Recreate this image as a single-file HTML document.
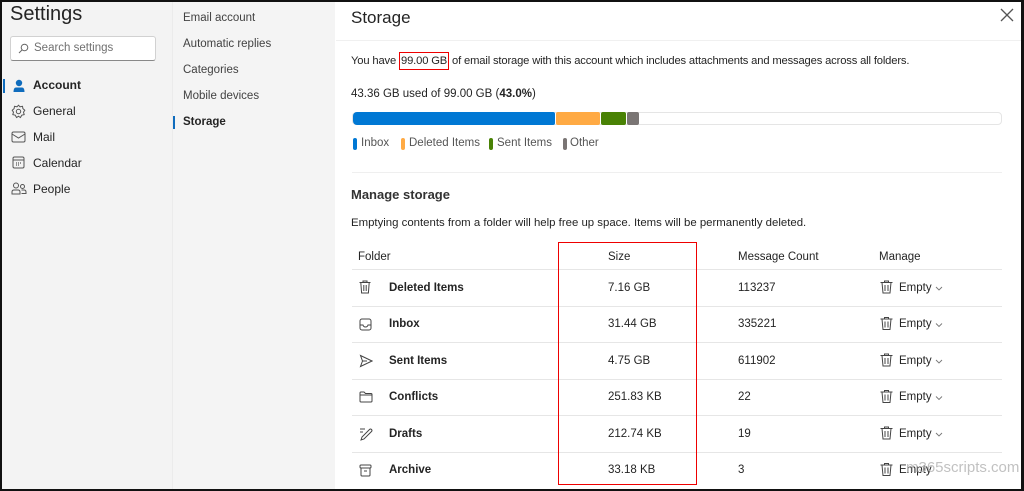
<!DOCTYPE html>
<html><head><meta charset="utf-8"><style>
*{margin:0;padding:0;box-sizing:border-box}
body{width:1024px;height:491px;overflow:hidden;font-family:"Liberation Sans",sans-serif;color:#242424;background:#fff;position:relative}
.a{position:absolute;white-space:nowrap}
.frame{position:absolute;left:0;top:0;width:1024px;height:491px;border:2px solid #111;border-right-width:3px;pointer-events:none}
.f{font-size:11.5px}
.nav{font-size:12px;color:#242424}
.mid{font-size:11.5px;color:#424242}
.hl{position:absolute;left:352px;width:650px;height:1px;background:#e6e6e6}
svg{position:absolute}
</style></head><body>
<div class="a" style="left:0;top:0;width:172px;height:491px;background:#f3f3f3"></div>
<div class="a" style="left:172px;top:0;width:163px;height:491px;background:#f4f4f4;border-left:1px solid #ebebeb"></div>
<div class="a" style="left:10px;top:3px;font-size:20px;color:#242424">Settings</div>
<div class="a" style="left:10px;top:36px;width:146px;height:25px;background:#fff;border:1px solid #d1d1d1;border-bottom-color:#888;border-radius:3px"></div>
<svg style="left:18px;top:43px" width="11" height="11" viewBox="0 0 11 11"><circle cx="6.5" cy="4.5" r="3.3" fill="none" stroke="#666" stroke-width="1"/><path d="M4 7 L1 10" stroke="#666" stroke-width="1"/></svg>
<div class="a" style="left:34px;top:42px;font-size:11.5px;color:#707070">Search settings</div>
<div class="a" style="left:3px;top:79px;width:2px;height:14px;background:#0f6cbd"></div>
<svg style="left:12px;top:79px" width="14" height="14" viewBox="0 0 14 14"><circle cx="7" cy="4" r="3.2" fill="#0f6cbd"/><path d="M1.5 13 Q1.5 8.5 4 8.5 H10 Q12.5 8.5 12.5 13 Z" fill="#0f6cbd"/></svg>
<div class="a nav" style="left:33px;top:78px;font-weight:bold">Account</div>
<svg style="left:11px;top:104px" width="15" height="15" viewBox="0 0 15 15" fill="none" stroke="#555" stroke-width="1"><circle cx="7.5" cy="7.5" r="2.2"/><path d="M7.5 1.2 L9 2.8 L11.5 2.3 L11.9 4.6 L13.8 6.2 L12.5 8.2 L13.2 10.6 L10.8 11.2 L9.4 13.5 L7.5 12.2 L5.6 13.5 L4.2 11.2 L1.8 10.6 L2.5 8.2 L1.2 6.2 L3.1 4.6 L3.5 2.3 L6 2.8 Z"/></svg>
<div class="a nav" style="left:33px;top:104px">General</div>
<svg style="left:11px;top:131px" width="15" height="12" viewBox="0 0 15 12" fill="none" stroke="#555" stroke-width="1"><rect x="1" y="1" width="13" height="10" rx="1.5"/><path d="M1 3 L7.5 7 L14 3"/></svg>
<div class="a nav" style="left:33px;top:130px">Mail</div>
<svg style="left:12px;top:156px" width="13" height="13" viewBox="0 0 13 13" fill="none" stroke="#555" stroke-width="1"><rect x="1" y="1" width="11" height="11" rx="1.5"/><path d="M1 4 H12"/><path d="M4 7h1M6 7h1M8 7h1M4 9h1M6 9h1" stroke-width="1.2"/></svg>
<div class="a nav" style="left:33px;top:156px">Calendar</div>
<svg style="left:11px;top:182px" width="16" height="13" viewBox="0 0 16 13" fill="none" stroke="#555" stroke-width="1"><circle cx="5" cy="3.5" r="2.5"/><path d="M1 12 V10 Q1 8 3 8 H7 Q9 8 9 10 V12 Z"/><circle cx="11.5" cy="4.5" r="2"/><path d="M10.5 8 H13 Q15 8 15 10 V11.5 H10.5"/></svg>
<div class="a nav" style="left:33px;top:182px">People</div>
<div class="a mid" style="left:183px;top:12px">Email account</div>
<div class="a mid" style="left:183px;top:38px">Automatic replies</div>
<div class="a mid" style="left:183px;top:64px">Categories</div>
<div class="a mid" style="left:183px;top:90px">Mobile devices</div>
<div class="a" style="left:173px;top:116px;width:2px;height:13px;background:#0f6cbd"></div>
<div class="a mid" style="left:183px;top:116px;font-weight:bold;color:#242424">Storage</div>
<div class="a" style="left:351px;top:8px;font-size:17px">Storage</div>
<svg style="left:1000px;top:8px" width="14" height="14" viewBox="0 0 14 14"><path d="M1 1 L13 13 M13 1 L1 13" stroke="#555" stroke-width="1.3"/></svg>
<div class="a" style="left:336px;top:40px;width:686px;height:1px;background:#f0f0f0"></div>
<div class="a" style="left:351px;top:55px;font-size:11.2px;letter-spacing:-0.15px">You have <span style="display:inline-block;border:1.5px solid #e00;padding:2px 1px;margin:-3px 0">99.00 GB</span> of email storage with this account which includes attachments and messages across all folders.</div>
<div class="a f" style="left:351px;top:88px">43.36 GB used of 99.00 GB (<b>43.0%</b>)</div>
<div class="a" style="left:352px;top:112px;width:650px;height:13px;border:1px solid #e5e5e5;border-radius:4px;background:#fff"></div>
<div class="a" style="left:353px;top:112px;width:202px;height:13px;background:#0078d4;border-radius:4px 2px 2px 4px"></div>
<div class="a" style="left:556px;top:112px;width:44px;height:13px;background:#ffaa44;border-radius:2px"></div>
<div class="a" style="left:601px;top:112px;width:25px;height:13px;background:#498205;border-radius:2px"></div>
<div class="a" style="left:627px;top:112px;width:12px;height:13px;background:#7a7574;border-radius:2px"></div>
<div class="a" style="left:353px;top:138px;width:4px;height:12px;background:#0078d4;border-radius:2px"></div>
<div class="a f" style="left:361px;top:137px;color:#555">Inbox</div>
<div class="a" style="left:401px;top:138px;width:4px;height:12px;background:#ffaa44;border-radius:2px"></div>
<div class="a f" style="left:409px;top:137px;color:#555">Deleted Items</div>
<div class="a" style="left:489px;top:138px;width:4px;height:12px;background:#498205;border-radius:2px"></div>
<div class="a f" style="left:497px;top:137px;color:#555">Sent Items</div>
<div class="a" style="left:563px;top:138px;width:4px;height:12px;background:#7a7574;border-radius:2px"></div>
<div class="a f" style="left:570px;top:137px;color:#555">Other</div>
<div class="hl" style="top:172px;background:#efefef"></div>
<div class="a" style="left:351px;top:187px;font-size:13px;font-weight:bold;color:#333">Manage storage</div>
<div class="a" style="left:351px;top:217px;font-size:11.4px">Emptying contents from a folder will help free up space. Items will be permanently deleted.</div>
<div class="a f" style="left:358px;top:251px">Folder</div>
<div class="a f" style="left:608px;top:251px">Size</div>
<div class="a f" style="left:738px;top:251px">Message Count</div>
<div class="a f" style="left:879px;top:251px">Manage</div>
<div class="hl" style="top:269px"></div><div class="hl" style="top:306px"></div><div class="hl" style="top:342px"></div><div class="hl" style="top:379px"></div><div class="hl" style="top:415px"></div><div class="hl" style="top:452px"></div>

<svg style="left:359px;top:280px" width="12" height="14" viewBox="0 0 12 14" fill="none" stroke="#444" stroke-width="1"><path d="M0.5 2.5 H11.5 M4 2.5 V1 H8 V2.5 M1.8 2.5 L2.6 13 H9.4 L10.2 2.5 M4.8 5 V11 M7.2 5 V11"/></svg>
<div class="a f" style="left:389px;top:282px;font-weight:bold">Deleted Items</div>
<div class="a f" style="left:608px;top:282px">7.16 GB</div><div class="a f" style="left:738px;top:282px">113237</div>

<svg style="left:359px;top:318px" width="13" height="13" viewBox="0 0 13 13" fill="none" stroke="#444" stroke-width="1"><rect x="1" y="1" width="11" height="11" rx="2"/><path d="M1 7 H4 Q4.5 9 6.5 9 Q8.5 9 9 7 H12"/></svg>
<div class="a f" style="left:389px;top:318px;font-weight:bold">Inbox</div>
<div class="a f" style="left:608px;top:318px">31.44 GB</div><div class="a f" style="left:738px;top:318px">335221</div>

<svg style="left:359px;top:354px" width="14" height="14" viewBox="0 0 14 14" fill="none" stroke="#444" stroke-width="1"><path d="M1.5 1.5 L13 7 L1.5 12.5 L3.5 7 Z M3.5 7 H8"/></svg>
<div class="a f" style="left:389px;top:355px;font-weight:bold">Sent Items</div>
<div class="a f" style="left:608px;top:355px">4.75 GB</div><div class="a f" style="left:738px;top:355px">611902</div>

<svg style="left:359px;top:391px" width="14" height="12" viewBox="0 0 14 12" fill="none" stroke="#444" stroke-width="1"><path d="M1 2 Q1 1 2 1 H5 L6.5 2.5 H12 Q13 2.5 13 3.5 V10 Q13 11 12 11 H2 Q1 11 1 10 Z M1 4 H13"/></svg>
<div class="a f" style="left:389px;top:391px;font-weight:bold">Conflicts</div>
<div class="a f" style="left:608px;top:391px">251.83 KB</div><div class="a f" style="left:738px;top:391px">22</div>

<svg style="left:359px;top:427px" width="14" height="14" viewBox="0 0 14 14" fill="none" stroke="#444" stroke-width="1"><path d="M1 2 H6 M1 5 H4 M2 13 L3 10 L10.5 2.5 Q11.5 1.5 12.5 2.5 Q13.5 3.5 12.5 4.5 L5 12 Z"/></svg>
<div class="a f" style="left:389px;top:428px;font-weight:bold">Drafts</div>
<div class="a f" style="left:608px;top:428px">212.74 KB</div><div class="a f" style="left:738px;top:428px">19</div>

<svg style="left:359px;top:464px" width="13" height="13" viewBox="0 0 13 13" fill="none" stroke="#444" stroke-width="1"><rect x="1" y="1" width="11" height="3" rx="1"/><path d="M2 4 V11 Q2 12 3 12 H10 Q11 12 11 11 V4 M5 7 H8"/></svg>
<div class="a f" style="left:389px;top:464px;font-weight:bold">Archive</div>
<div class="a f" style="left:608px;top:464px">33.18 KB</div><div class="a f" style="left:738px;top:464px">3</div>

<svg style="left:880px;top:280px" width="70" height="200" viewBox="0 0 70 200">
<defs><g id="t" fill="none" stroke="#444" stroke-width="1"><path d="M0.5 2.5 H12.5 M4.5 2.5 V1 H8.5 V2.5 M2 2.5 L3 13 H10 L11 2.5 M5 5 V11 M8 5 V11"/></g><path id="c" d="M0 0 L3 3 L6 0" fill="none" stroke="#777" stroke-width="0.9"/></defs>
<use href="#t" y="0"/><use href="#t" y="36.5"/><use href="#t" y="73"/><use href="#t" y="109.5"/><use href="#t" y="146"/><use href="#t" y="182.5"/>
<use href="#c" x="56" y="7"/><use href="#c" x="56" y="43.5"/><use href="#c" x="56" y="80"/><use href="#c" x="56" y="116.5"/><use href="#c" x="56" y="153"/>
</svg>
<div class="a f" style="left:899px;top:282px">Empty</div>
<div class="a f" style="left:899px;top:318px">Empty</div>
<div class="a f" style="left:899px;top:355px">Empty</div>
<div class="a f" style="left:899px;top:391px">Empty</div>
<div class="a f" style="left:899px;top:428px">Empty</div>
<div class="a f" style="left:899px;top:464px">Empty</div>
<div class="a" style="left:906px;top:459px;font-size:15px;color:#bbb;opacity:0.9">m365scripts.com</div>
<div class="a" style="left:558px;top:242px;width:139px;height:243px;border:1.5px solid #e00"></div>
<div class="frame"></div>
</body></html>
